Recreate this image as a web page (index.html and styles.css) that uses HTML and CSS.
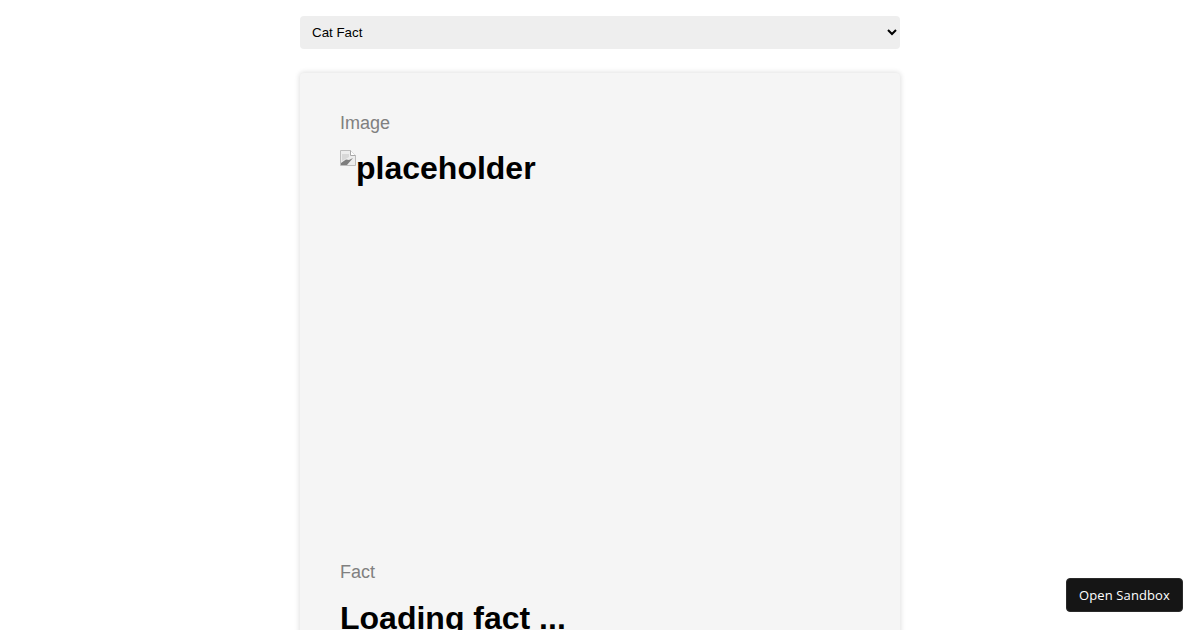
FILE: index.html
```html
<!DOCTYPE html>
<html lang="en">
<head>
    <meta charset="UTF-8">
    <meta name="viewport" content="width=device-width, initial-scale=1.0">
    <title>Cat Fact</title>
    <link rel="stylesheet" href="styles.css">
</head>
<body>
    <main class="page">
        <select class="picker">
            <option>Cat Fact</option>
        </select>
        <section class="card">
            <p class="label">Image</p>
            <div class="image-box">
                <svg class="broken" width="16" height="16" viewBox="0 0 16 16" aria-hidden="true">
                    <path d="M0.5 0.5H10.5L15.5 5.5V15.5H0.5Z" fill="#ededed" stroke="#bdbdbd"/>
                    <path d="M10.5 0.5V5.5H15.5" fill="#fff" stroke="#a8a8a8"/>
                    <path d="M2 4H9V7L2 11Z" fill="#d8d8d8"/>
                    <path d="M1 15V13L6 9.5L9 10L13 8L7 15Z" fill="#7e7e7e"/>
                </svg><span>placeholder</span>
            </div>
            <p class="label">Fact</p>
            <h2 class="fact">Loading fact ...</h2>
        </section>
    </main>
    <a class="sandbox">Open Sandbox</a>
</body>
</html>
```

FILE: styles.css
```css
* {
    box-sizing: border-box;
}

html, body {
    height: 100%;
    overflow: hidden;
}

body {
    margin: 0;
    background: #fff;
    font-family: "Liberation Sans", Arial, sans-serif;
}

.page {
    width: 600px;
    margin: 0 auto;
    padding-top: 16px;
}

.picker {
    display: block;
    width: 100%;
    height: 33px;
    padding: 0 0 0 8px;
    border: none;
    border-radius: 4px;
    background: #eee;
    color: #000;
    font-family: "Liberation Sans", Arial, sans-serif;
    font-size: 13.33px;
}

.card {
    margin-top: 24px;
    padding: 40px;
    border-radius: 4px;
    background: #f5f5f5;
    box-shadow: 0 0 5px 1px rgba(0, 0, 0, 0.12);
}

.label {
    margin: 0;
    color: #808080;
    font-size: 18px;
    line-height: 21px;
}

.image-box {
    height: 400px;
    margin: 16px 0 12px;
    color: #000;
    font-size: 32px;
    font-weight: bold;
    line-height: 37px;
}

.broken {
    vertical-align: top;
}

.fact {
    margin: 17px 0 0;
    font-size: 32px;
    line-height: 37px;
}

.sandbox {
    position: fixed;
    right: 17px;
    bottom: 18px;
    width: 117px;
    height: 34px;
    border: 1px solid #2a2a2a;
    border-radius: 4px;
    background: #151515;
    color: #fff;
    font-family: "Open Sans", sans-serif;
    font-size: 13px;
    font-weight: 500;
    letter-spacing: 0.1px;
    line-height: 32px;
    text-align: center;
}
```
